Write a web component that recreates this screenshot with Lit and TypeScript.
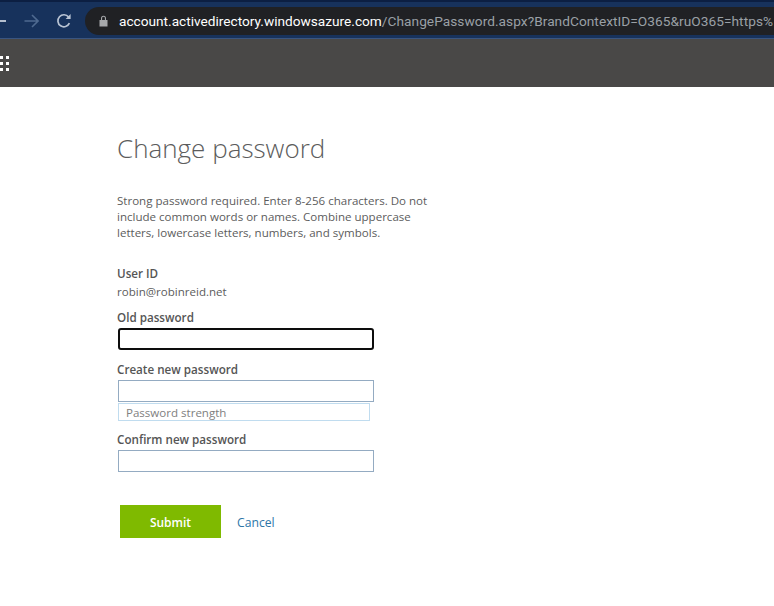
import { LitElement, html, css } from "lit";
import { customElement } from "lit/decorators.js";

@customElement("app-root")
export class AppRoot extends LitElement {
  static styles = css`
    :host { display: block; width: 774px; height: 606px; overflow: hidden; background: #fff; font-family: "Open Sans", "Noto Sans", sans-serif; }
    .chrome { height: 39px; box-sizing: border-box; background: #17325c; border-bottom: 1px solid #3a5580; display: flex; flex-direction: column; }
    .tabs { height: 2px; background: #0c1f42; flex: none; }
    .toolbar { flex: 1; display: flex; align-items: center; padding-top: 2px; }
    .nav { display: flex; align-items: center; }
    .back { width: 6px; height: 2px; background: #b4bfcf; margin-right: 18px; }
    .fwd { margin-right: 17px; display: block; }
    .reload { margin-right: 13px; display: block; }
    .omni { flex: 1; height: 28px; background: #202124; border-radius: 14px 0 0 14px; display: flex; align-items: center; padding-left: 14px; overflow: hidden; white-space: nowrap; }
    .lock { margin-right: 11px; flex: none; display: block; }
    .url { font-family: "Roboto", sans-serif; font-size: 13.7px; color: #9aa0a6; letter-spacing: 0.04px; }
    .host { color: #fff; letter-spacing: 0; font-size: 13.66px; }
    .suite { height: 48px; background: #494847; display: flex; align-items: center; }
    .waffle { display: grid; grid-template-columns: repeat(2, 3px); gap: 3px; }
    .waffle i { width: 3px; height: 3px; background: #fff; display: block; }
    .content { padding: 44px 0 0 117px; color: #5c5c5c; }
    h1 { margin: 0; font-size: 26px; font-weight: 300; line-height: 34px; color: #5c5c5c; }
    .desc { margin: 28px 0 0; width: 318px; font-size: 11.55px; line-height: 16px; }
    .label { font-size: 11.65px; font-weight: 600; line-height: 16px; color: #555; }
    .uid { margin-top: 25px; }
    .value { font-size: 11.55px; line-height: 16px; margin-top: 2px; }
    .old { margin-top: 10px; }
    .input { box-sizing: border-box; width: 256px; height: 22px; margin: 2px 0 0 1px; border: 1px solid #94abc2; background: #fff; }
    .input.focus { border: 2px solid #0d0d0d; border-radius: 3px; }
    .next { margin-top: 12px; }
    .strength { box-sizing: border-box; width: 252px; height: 18px; margin: 1px 0 0 1px; border: 1px solid #c0dcef; padding-left: 7px; font-size: 11.55px; line-height: 18px; color: #808080; }
    .next2 { margin-top: 11px; }
    .actions { display: flex; align-items: center; margin: 33px 0 0 3px; }
    .submit { box-sizing: border-box; width: 101px; height: 33px; padding-top: 2px; background: #7fba00; color: #fff; font-size: 12px; font-weight: 600; display: flex; align-items: center; justify-content: center; }
    .cancel { margin: 2px 0 0 16px; font-size: 12.2px; color: #2e76a8; }
  `;

  render() {
    return html`
      <div class="chrome">
        <div class="tabs"></div>
        <div class="toolbar">
          <div class="nav">
            <span class="back"></span>
            <svg class="fwd" width="15" height="14" viewBox="0 0 15 14" fill="none" stroke="#4f6a90" stroke-width="1.6"><path d="M0.5 7H14M8 1l6 6-6 6"/></svg>
            <svg class="reload" width="16" height="16" viewBox="0 0 16 16" fill="none" stroke="#b9c4d4" stroke-width="1.7"><path d="M13.4 10.2A6 6 0 1 1 12.6 4"/><path d="M14.6 1v5h-5" fill="#b9c4d4" stroke="none"/></svg>
          </div>
          <div class="omni">
            <svg class="lock" width="9" height="12" viewBox="0 0 9 12"><path fill="#a6a8ab" d="M0.5 5h8v6.5h-8zM2 5V3.2a2.5 2.5 0 0 1 5 0V5H5.9V3.2a1.4 1.4 0 0 0-2.8 0V5z"/></svg>
            <span class="url"><span class="host">account.activedirectory.windowsazure.com</span>/ChangePassword.aspx?BrandContextID=O365&amp;ruO365=https%</span>
          </div>
        </div>
      </div>
      <div class="suite">
        <div class="waffle"><i></i><i></i><i></i><i></i><i></i><i></i></div>
      </div>
      <div class="content">
        <h1>Change password</h1>
        <p class="desc">Strong password required. Enter 8-256 characters. Do not include common words or names. Combine uppercase letters, lowercase letters, numbers, and symbols.</p>
        <div class="label uid">User ID</div>
        <div class="value">robin@robinreid.net</div>
        <div class="label old">Old password</div>
        <div class="input focus"></div>
        <div class="label next">Create new password</div>
        <div class="input"></div>
        <div class="strength">Password strength</div>
        <div class="label next2">Confirm new password</div>
        <div class="input"></div>
        <div class="actions">
          <div class="submit">Submit</div>
          <a class="cancel">Cancel</a>
        </div>
      </div>
    `;
  }
}
